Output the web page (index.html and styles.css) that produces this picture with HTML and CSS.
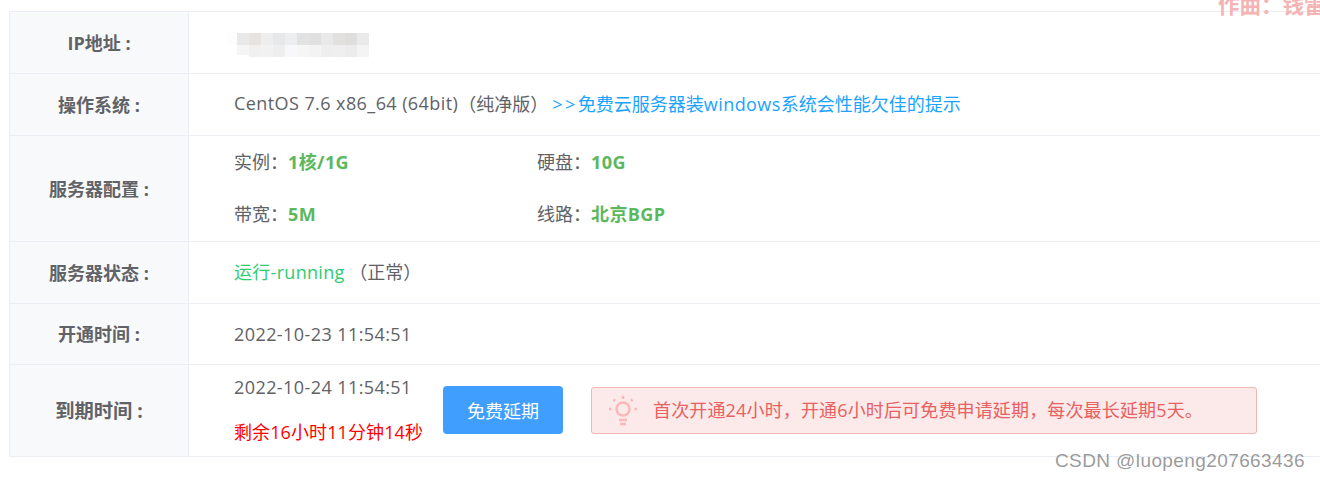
FILE: index.html
```html
<!DOCTYPE html>
<html>
<head>
  <title>服务器详情</title>
  <meta charset="UTF-8">
  <link rel="stylesheet" href="styles.css">
</head>
<body>
  <div class="lyric">作曲：钱雷</div>

  <div class="info-table">
    <div class="row row-ip">
      <div class="label">IP地址 :</div>
      <div class="value">
        <!-- 打码的IP -->
        <svg class="ip-blur" width="142" height="24" viewBox="0 0 142 24">
          <rect x="0" y="0" width="10" height="12" fill="#fdfdfd"/>
          <rect x="10" y="0" width="12" height="12" fill="#e9e9ea"/>
          <rect x="22" y="0" width="12" height="12" fill="#e6e3e1"/>
          <rect x="34" y="0" width="12" height="12" fill="#eeeeef"/>
          <rect x="46" y="0" width="12" height="12" fill="#e7e8ea"/>
          <rect x="58" y="0" width="12" height="12" fill="#edeef0"/>
          <rect x="70" y="0" width="12" height="12" fill="#e3e2e2"/>
          <rect x="82" y="0" width="12" height="12" fill="#e1e0e0"/>
          <rect x="94" y="0" width="12" height="12" fill="#e9e9ea"/>
          <rect x="106" y="0" width="12" height="12" fill="#e2e1e0"/>
          <rect x="118" y="0" width="12" height="12" fill="#dededd"/>
          <rect x="130" y="0" width="12" height="12" fill="#eaeaeb"/>
          <rect x="10" y="12" width="12" height="10" fill="#f5f5f5"/>
          <rect x="22" y="12" width="12" height="12" fill="#f1f0f0"/>
          <rect x="34" y="12" width="12" height="12" fill="#f1f1f1"/>
          <rect x="46" y="12" width="12" height="12" fill="#eeeeee"/>
          <rect x="58" y="12" width="12" height="12" fill="#f8f8fa"/>
          <rect x="70" y="12" width="12" height="12" fill="#f6f6f6"/>
          <rect x="82" y="12" width="12" height="12" fill="#f3f3f3"/>
          <rect x="94" y="12" width="12" height="12" fill="#eeeeee"/>
          <rect x="106" y="12" width="12" height="12" fill="#efefef"/>
          <rect x="118" y="12" width="12" height="12" fill="#ececec"/>
          <rect x="130" y="12" width="12" height="12" fill="#f4f4f4"/>
        </svg>
      </div>
    </div>

    <div class="row row-os">
      <div class="label">操作系统 :</div>
      <div class="value">
        <span class="latin">CentOS 7.6 x86_64 (64bit)</span><span>（纯净版）</span>
        <a class="tip-link"><span class="arrows">&gt;&gt;</span>免费云服务器装<span class="latin">windows</span>系统会性能欠佳的提示</a>
      </div>
    </div>

    <div class="row row-config">
      <div class="label">服务器配置 :</div>
      <div class="value config-grid">
        <div>实例：<b>1核/1G</b></div>
        <div>硬盘：<b>10G</b></div>
        <div>带宽：<b>5M</b></div>
        <div>线路：<b>北京BGP</b></div>
      </div>
    </div>

    <div class="row row-status">
      <div class="label">服务器状态 :</div>
      <div class="value"><span class="running">运行-running</span>&nbsp;（正常）</div>
    </div>

    <div class="row row-open">
      <div class="label">开通时间 :</div>
      <div class="value latin">2022-10-23 11:54:51</div>
    </div>

    <div class="row row-expire">
      <div class="label">到期时间 :</div>
      <div class="value expire">
        <div class="expire-time">
          <div class="latin">2022-10-24 11:54:51</div>
          <div class="remain">剩余16小时11分钟14秒</div>
        </div>
        <button class="btn-renew">免费延期</button>
        <div class="notice">
          <svg class="notice-icon" width="30" height="32" viewBox="0 0 30 32" fill="none" stroke="#f9b9b9" stroke-width="2.500">
            <circle cx="15" cy="14" r="6.500"/>
            <path d="M15 1v3M5.500 4.500l1.500 1.500M24.500 4.500l-1.500 1.500M1 14h2.500M26.500 14h2.500"/>
            <path d="M11 25h8M12 29h6"/>
          </svg>
          <span>首次开通24小时，开通6小时后可免费申请延期，每次最长延期5天。</span>
        </div>
      </div>
    </div>
  </div>

  <div class="watermark">CSDN @luopeng207663436</div>
</body>
</html>
```

FILE: styles.css
```css
body {
  margin: 0;
  padding: 11px 0 0 9px;
  background: #fff;
  font-family: "Open Sans", "Noto Sans CJK SC", sans-serif;
  font-size: 18px;
  color: #606266;
  overflow: hidden;
}

.info-table {
  border-top: 1px solid #ebeef5;
  border-left: 1px solid #ebeef5;
}

.row {
  display: flex;
  border-bottom: 1px solid #ebeef5;
}

.row-ip { height: 61px; }
.row-os { height: 61px; }
.row-config { height: 105px; }
.row-status { height: 61px; }
.row-open { height: 60px; }
.row-expire { height: 91px; }

.label {
  flex: 0 0 178px;
  display: flex;
  align-items: center;
  justify-content: center;
  box-sizing: content-box;
  padding-bottom: 2px;
  height: calc(100% - 2px);
  background: #f8f9fb;
  border-right: 1px solid #ebeef5;
  font-weight: 700;
  color: #606266;
}

.row-expire .label {
  font-size: 19.3px;
}

.value {
  flex: 1;
  display: flex;
  align-items: center;
  padding-left: 45px;
  padding-bottom: 3px;
}

.latin {
  letter-spacing: 0.42px;
}

.row-ip .value,
.row-open .value {
  padding-bottom: 0;
}

.ip-blur {
  margin: 5px 0 0 -7px;
}

.tip-link {
  margin-left: 4px;
  color: #1aa3ff;
}

.arrows {
  letter-spacing: 2.5px;
}

.config-grid {
  display: grid;
  grid-template-columns: 303px 1fr;
  grid-auto-rows: 52px;
  align-content: center;
  align-items: center;
  padding-bottom: 4px;
}

.config-grid b {
  color: #5cb85c;
  letter-spacing: 0.4px;
}

.running {
  color: #2ecc71;
  letter-spacing: 0.3px;
}

.expire {
  gap: 20px;
  padding-bottom: 2px;
}

.expire-time {
  width: 189px;
  white-space: nowrap;
}

.remain {
  margin-top: 19px;
  color: #f00;
  letter-spacing: 0.1px;
}

.btn-renew {
  flex: none;
  width: 120px;
  height: 48px;
  border: none;
  border-radius: 4px;
  background: #409eff;
  color: #fff;
  font-family: inherit;
  font-size: 18px;
}

.notice {
  flex: none;
  display: flex;
  align-items: center;
  width: 666px;
  height: 47px;
  margin: 2px 0 0 8px;
  padding: 0 0 3px 16px;
  box-sizing: border-box;
  background: #fceaea;
  border: 1px solid #f5b5b5;
  border-radius: 3px;
  color: #e8605f;
  letter-spacing: 0.15px;
}

.notice-icon {
  margin: 3px 15px 0 0;
}

.lyric {
  position: absolute;
  top: -12px;
  left: 1218px;
  font-size: 21.5px;
  font-weight: 700;
  white-space: nowrap;
  color: #f5b3b3;
}

.watermark {
  position: absolute;
  top: 450px;
  left: 1055px;
  font-family: "Liberation Sans", sans-serif;
  font-size: 19px;
  letter-spacing: 0.4px;
  color: rgba(110, 110, 110, 0.7);
}
```
